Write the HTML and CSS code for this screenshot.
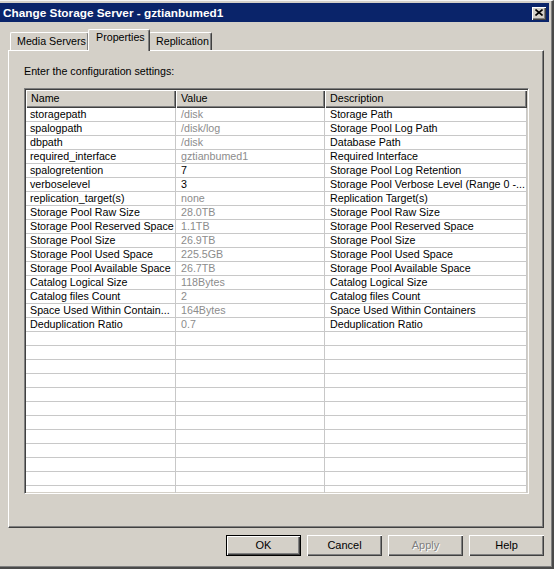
FILE: index.html
```html
<!DOCTYPE html>
<html>
<head>
<meta charset="utf-8">
<title>Change Storage Server</title>
<link rel="stylesheet" href="styles.css">
</head>
<body>
<div class="window">
  <div class="titlebar">
    <span class="title">Change Storage Server - gztianbumed1</span>
    <span class="close"><svg width="8" height="7" viewBox="0 0 8 7"><path d="M0.5 0.5 L7.5 6.5 M7.5 0.5 L0.5 6.5" stroke="#000" stroke-width="1.6" fill="none"/></svg></span>
  </div>
  <div class="tabstrip">
    <div class="tab tab-media">Media Servers</div>
    <div class="tab tab-props selected">Properties</div>
    <div class="tab tab-repl">Replication</div>
  </div>
  <div class="panel">
    <div class="label">Enter the configuration settings:</div>
    <div class="listview">
      <div class="header">
        <div class="hcell">Name</div>
        <div class="hcell">Value</div>
        <div class="hcell">Description</div>
        <div class="hrest"></div>
      </div>
      <div class="rows">
        <div class="row"><div class="cell">storagepath</div><div class="cell ro">/disk</div><div class="cell">Storage Path</div><div class="rest"></div></div>
        <div class="row"><div class="cell">spalogpath</div><div class="cell ro">/disk/log</div><div class="cell">Storage Pool Log Path</div><div class="rest"></div></div>
        <div class="row"><div class="cell">dbpath</div><div class="cell ro">/disk</div><div class="cell">Database Path</div><div class="rest"></div></div>
        <div class="row"><div class="cell">required_interface</div><div class="cell ro">gztianbumed1</div><div class="cell">Required Interface</div><div class="rest"></div></div>
        <div class="row"><div class="cell">spalogretention</div><div class="cell">7</div><div class="cell">Storage Pool Log Retention</div><div class="rest"></div></div>
        <div class="row"><div class="cell">verboselevel</div><div class="cell">3</div><div class="cell">Storage Pool Verbose Level (Range 0 -...</div><div class="rest"></div></div>
        <div class="row"><div class="cell">replication_target(s)</div><div class="cell ro">none</div><div class="cell">Replication Target(s)</div><div class="rest"></div></div>
        <div class="row"><div class="cell">Storage Pool Raw Size</div><div class="cell ro">28.0TB</div><div class="cell">Storage Pool Raw Size</div><div class="rest"></div></div>
        <div class="row"><div class="cell">Storage Pool Reserved Space</div><div class="cell ro">1.1TB</div><div class="cell">Storage Pool Reserved Space</div><div class="rest"></div></div>
        <div class="row"><div class="cell">Storage Pool Size</div><div class="cell ro">26.9TB</div><div class="cell">Storage Pool Size</div><div class="rest"></div></div>
        <div class="row"><div class="cell">Storage Pool Used Space</div><div class="cell ro">225.5GB</div><div class="cell">Storage Pool Used Space</div><div class="rest"></div></div>
        <div class="row"><div class="cell">Storage Pool Available Space</div><div class="cell ro">26.7TB</div><div class="cell">Storage Pool Available Space</div><div class="rest"></div></div>
        <div class="row"><div class="cell">Catalog Logical Size</div><div class="cell ro">118Bytes</div><div class="cell">Catalog Logical Size</div><div class="rest"></div></div>
        <div class="row"><div class="cell">Catalog files Count</div><div class="cell ro">2</div><div class="cell">Catalog files Count</div><div class="rest"></div></div>
        <div class="row"><div class="cell">Space Used Within Contain...</div><div class="cell ro">164Bytes</div><div class="cell">Space Used Within Containers</div><div class="rest"></div></div>
        <div class="row"><div class="cell">Deduplication Ratio</div><div class="cell ro">0.7</div><div class="cell">Deduplication Ratio</div><div class="rest"></div></div>
        <div class="row"><div class="cell"></div><div class="cell"></div><div class="cell"></div><div class="rest"></div></div>
        <div class="row"><div class="cell"></div><div class="cell"></div><div class="cell"></div><div class="rest"></div></div>
        <div class="row"><div class="cell"></div><div class="cell"></div><div class="cell"></div><div class="rest"></div></div>
        <div class="row"><div class="cell"></div><div class="cell"></div><div class="cell"></div><div class="rest"></div></div>
        <div class="row"><div class="cell"></div><div class="cell"></div><div class="cell"></div><div class="rest"></div></div>
        <div class="row"><div class="cell"></div><div class="cell"></div><div class="cell"></div><div class="rest"></div></div>
        <div class="row"><div class="cell"></div><div class="cell"></div><div class="cell"></div><div class="rest"></div></div>
        <div class="row"><div class="cell"></div><div class="cell"></div><div class="cell"></div><div class="rest"></div></div>
        <div class="row"><div class="cell"></div><div class="cell"></div><div class="cell"></div><div class="rest"></div></div>
        <div class="row"><div class="cell"></div><div class="cell"></div><div class="cell"></div><div class="rest"></div></div>
        <div class="row"><div class="cell"></div><div class="cell"></div><div class="cell"></div><div class="rest"></div></div>
        <div class="row"><div class="cell"></div><div class="cell"></div><div class="cell"></div><div class="rest"></div></div>
      </div>
    </div>
  </div>
  <div class="buttons">
    <div class="btn default"><span>OK</span></div>
    <div class="btn"><span>Cancel</span></div>
    <div class="btn disabled"><span>Apply</span></div>
    <div class="btn"><span>Help</span></div>
  </div>
</div>
</body>
</html>
```
FILE: styles.css
```css
html, body {
  margin: 0;
  padding: 0;
  background: #d4d0c8;
}
body {
  width: 554px;
  height: 569px;
  overflow: hidden;
  font-family: "Liberation Sans", Arial, sans-serif;
  font-size: 10.7px;
  color: #000;
}
.window {
  width: 554px;
  height: 569px;
  box-sizing: border-box;
  padding-top: 2px;
  border-top: 1px solid #f4f4f4;
  border-right: 2px solid #4a4a4a;
  border-bottom: 2px solid #4a4a4a;
  box-shadow: inset -1px 0 #808080, inset 0 -1px #808080;
  display: flex;
  flex-direction: column;
}
.titlebar {
  height: 19px;
  margin-right: 3px;
  background: #0a246a;
  display: flex;
  align-items: center;
  justify-content: space-between;
}
.title {
  color: #fff;
  font-weight: bold;
  font-size: 11.8px;
  padding-left: 3px;
  letter-spacing: 0;
}
.close {
  width: 14px;
  height: 13px;
  box-sizing: border-box;
  margin-right: 3px;
  margin-top: 1px;
  background: #d4d0c8;
  box-shadow: inset 1px 1px #fff, inset -1px -1px #404040, inset -2px -2px #808080;
  display: flex;
  align-items: center;
  justify-content: center;
  padding-right: 1px;
  padding-bottom: 1px;
}
.close svg { display: block; }

.tabstrip {
  margin-top: 7px;
  margin-left: 10px;
  height: 21px;
  display: flex;
  align-items: flex-end;
  position: relative;
  z-index: 2;
}
.tab {
  box-sizing: border-box;
  height: 18px;
  border-top: 1px solid #fff;
  border-left: 1px solid #fff;
  border-right: 1px solid #404040;
  box-shadow: inset -1px 0 #808080;
  border-radius: 2px 2px 0 0;
  padding-left: 6px;
  line-height: 16px;
  white-space: nowrap;
  background: #d4d0c8;
}
.tab-media { width: 79px; }
.tab-props { width: 62px; }
.tab-repl { width: 63px; margin-left: 0; }
.tab.selected {
  height: 22px;
  margin: 0 -1px -1px -1px;
  padding-left: 7px;
  line-height: 15px;
  position: relative;
  z-index: 3;
}
.panel {
  margin-left: 8px;
  width: 536px;
  height: 478px;
  box-sizing: border-box;
  border-top: 1px solid #fff;
  border-left: 1px solid #fff;
  border-right: 1px solid #404040;
  border-bottom: 1px solid #404040;
  box-shadow: inset -1px -1px #808080;
  padding: 13px 14px 0 15px;
}
.label {
  line-height: 14px;
  height: 14px;
}
.listview {
  margin-top: 10px;
  width: 505px;
  height: 406px;
  box-sizing: border-box;
  background: #fff;
  border-top: 1px solid #808080;
  border-left: 1px solid #808080;
  border-right: 1px solid #fff;
  border-bottom: 1px solid #fff;
  box-shadow: inset 1px 1px #404040, inset -1px -1px #d4d0c8;
  padding: 1px 1px 1px 1px;
  overflow: hidden;
}
.header, .row {
  display: grid;
  grid-template-columns: 150px 149px 202px 1fr;
}
.header {
  height: 18px;
  background: #d4d0c8;
}
.hcell {
  box-sizing: border-box;
  height: 18px;
  line-height: 17px;
  padding-left: 5px;
  box-shadow: inset 1px 1px #fff, inset -1px -1px #404040, inset -2px -2px #808080;
  white-space: nowrap;
  overflow: hidden;
}
.hrest { background: #fff; }
.rows {
  height: 385px;
  overflow: hidden;
}
.row {
  height: 14px;
  box-sizing: border-box;
  border-bottom: 1px solid #c8c8c8;
}
.cell {
  box-sizing: border-box;
  height: 13px;
  line-height: 13px;
  padding-left: 4px;
  border-right: 1px solid #c8c8c8;
  white-space: nowrap;
  overflow: hidden;
}
.cell:nth-child(2), .cell:nth-child(3) { padding-left: 5px; }
.cell.ro { color: #8c8c8c; }

.buttons {
  margin-top: 7px;
  padding-right: 8px;
  display: flex;
  justify-content: flex-end;
  gap: 6px;
}
.btn {
  width: 75px;
  height: 21px;
  box-sizing: border-box;
  box-shadow: inset 1px 1px #fff, inset -1px -1px #404040, inset -2px -2px #808080;
  display: flex;
  align-items: center;
  justify-content: center;
  font-size: 11px;
  padding-bottom: 1px;
}
.btn.default {
  border: 1px solid #000;
  box-shadow: inset 1px 1px #fff, inset -1px -1px #404040, inset -2px -2px #808080;
}
.btn.disabled span {
  color: #808080;
  text-shadow: 1px 1px 0 #fff;
}
```
